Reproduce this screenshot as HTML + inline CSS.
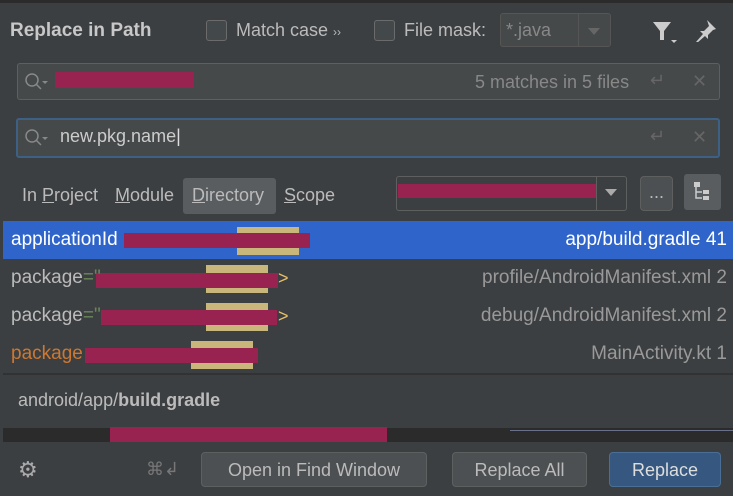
<html><head><style>
body{margin:0;width:733px;height:496px;background:#3c3f41;font-family:"Liberation Sans",sans-serif;color:#bbbbbb;overflow:hidden;position:relative}
div,span{position:absolute;box-sizing:border-box}
.t{font-size:18px;white-space:nowrap}
.r{right:6px;text-align:right}
.cb{width:21px;height:21px;border:1px solid #6b6b6b;border-radius:3px;background:#43494a}
.fld{background:#45494a;border:1px solid #5e6060;border-radius:3px}
.red{background:#992350}
.y{background:#c9b67a}
.btn{border:1px solid #5e6060;border-radius:4px;background:#4c5052;text-align:center;font-size:18px;color:#bbb}
</style></head><body>
<div style="left:0;top:0;width:733px;height:3px;background:#2b2b2b"></div>
<div class="t" style="left:10px;top:20px;font-weight:bold;font-size:19px;color:#c8c8c8">Replace in Path</div>
<div class="cb" style="left:206px;top:20px"></div>
<div class="t" style="left:236px;top:20px">Match case <span style="position:static;font-size:12px">››</span></div>
<div class="cb" style="left:374px;top:20px"></div>
<div class="t" style="left:404px;top:20px">File mask:</div>
<div class="fld" style="left:500px;top:13px;width:111px;height:34px;border-color:#555"></div>
<div class="t" style="left:506px;top:20px;color:#888">*.java</div>
<div style="left:578px;top:13px;width:1px;height:34px;background:#555"></div>
<div style="left:588px;top:28px;border-left:6px solid transparent;border-right:6px solid transparent;border-top:7px solid #666"></div>
<svg style="position:absolute;left:652px;top:20px" width="26" height="26"><path d="M1 2h18l-7 9v9h-4v-9z" fill="#ccc"/><path d="M19 20l3 3 3-3z" fill="#ccc"/></svg>
<svg style="position:absolute;left:694px;top:18px" width="24" height="24"><path d="M13 2l9 9-3 1-5 5v4l-3-3-8 7-1-1 7-8-3-3h4l5-5z" fill="#ccc"/></svg>

<div class="fld" style="left:17px;top:63px;width:703px;height:37px"></div>
<svg style="position:absolute;left:24px;top:72px" width="26" height="20"><circle cx="8" cy="8" r="6" stroke="#888" stroke-width="1.5" fill="none"/><path d="M12 12l5 5" stroke="#888" stroke-width="1.5"/><path d="M18 9h6l-3 3z" fill="#888"/></svg>
<div class="red" style="left:55px;top:72px;width:139px;height:16px"></div>
<div class="t" style="left:475px;top:72px;color:#888">5 matches in 5 files</div>
<div class="t" style="left:650px;top:70px;color:#666">↵</div>
<div class="t" style="left:692px;top:71px;color:#666">✕</div>

<div class="fld" style="left:16px;top:118px;width:704px;height:40px;border:2px solid #3d6185"></div>
<svg style="position:absolute;left:24px;top:128px" width="26" height="20"><circle cx="8" cy="8" r="6" stroke="#888" stroke-width="1.5" fill="none"/><path d="M12 12l5 5" stroke="#888" stroke-width="1.5"/><path d="M18 9h6l-3 3z" fill="#888"/></svg>
<div class="t" style="left:60px;top:126px;color:#ccc">new.pkg.name<span style="position:static;color:#ddd;font-weight:100">|</span></div>
<div class="t" style="left:650px;top:126px;color:#666">↵</div>
<div class="t" style="left:692px;top:127px;color:#666">✕</div>

<div class="t" style="left:22px;top:185px">In <u>P</u>roject</div>
<div class="t" style="left:115px;top:185px"><u>M</u>odule</div>
<div style="left:183px;top:178px;width:93px;height:36px;background:#595d60;border-radius:3px"></div>
<div class="t" style="left:192px;top:185px"><u>D</u>irectory</div>
<div class="t" style="left:284px;top:185px"><u>S</u>cope</div>
<div class="fld" style="left:396px;top:176px;width:231px;height:35px;background:#3c3f41"></div>
<div class="red" style="left:398px;top:184px;width:198px;height:14px"></div>
<div style="left:596px;top:176px;width:1px;height:35px;background:#5e6060"></div>
<div style="left:605px;top:189px;border-left:6px solid transparent;border-right:6px solid transparent;border-top:7px solid #aaa"></div>
<div class="btn" style="left:640px;top:176px;width:33px;height:35px;line-height:30px">...</div>
<div style="left:684px;top:174px;width:37px;height:36px;background:#595d60;border-radius:3px"></div>
<svg style="position:absolute;left:692px;top:180px" width="22" height="24"><rect x="2" y="2" width="6" height="5" fill="#ccc"/><path d="M4 7v11h6M4 12h6" stroke="#ccc" stroke-width="1.5" fill="none"/><rect x="11" y="10" width="6" height="4" fill="#ccc"/><rect x="11" y="16" width="6" height="4" fill="#ccc"/></svg>

<div style="left:3px;top:221px;width:730px;height:38px;background:#2f65ca"></div>
<div class="y" style="left:237px;top:227px;width:62px;height:28px"></div>
<div class="red" style="left:124px;top:233px;width:186px;height:15px"></div>
<div class="t" style="left:11px;top:229px;color:#fff;font-size:19px">applicationId</div>
<div class="t r" style="top:229px;color:#fff;font-size:19px">app/build.gradle 41</div>

<div class="y" style="left:206px;top:265px;width:62px;height:28px"></div>
<div class="red" style="left:96px;top:273px;width:182px;height:15px"></div>
<div class="t" style="left:11px;top:267px;font-size:19px">package<span style="position:static;color:#6a8759">="</span></div>
<div class="t" style="left:278px;top:268px;color:#e8bf6a">&gt;</div>
<div class="t r" style="top:267px;color:#999;font-size:19px">profile/AndroidManifest.xml 2</div>

<div class="y" style="left:206px;top:303px;width:62px;height:28px"></div>
<div class="red" style="left:101px;top:310px;width:176px;height:15px"></div>
<div class="t" style="left:11px;top:305px;font-size:19px">package<span style="position:static;color:#6a8759">="</span></div>
<div class="t" style="left:278px;top:306px;color:#e8bf6a">&gt;</div>
<div class="t r" style="top:305px;color:#999;font-size:19px">debug/AndroidManifest.xml 2</div>

<div class="y" style="left:191px;top:341px;width:62px;height:28px"></div>
<div class="red" style="left:85px;top:348px;width:173px;height:15px"></div>
<div class="t" style="left:11px;top:343px;color:#cc7832;font-size:19px">package</div>
<div class="t r" style="top:343px;color:#999;font-size:19px">MainActivity.kt 1</div>

<div style="left:3px;top:373px;width:730px;height:2px;background:#323232"></div>
<div class="t" style="left:18px;top:390px;color:#bbb">android/app/<b>build.gradle</b></div>
<div style="left:3px;top:428px;width:730px;height:14px;background:#2b2b2b"></div>
<div class="red" style="left:110px;top:427px;width:277px;height:15px"></div>
<div style="left:510px;top:430px;width:223px;height:1px;background:#6a6f8a"></div>

<div class="t" style="left:18px;top:457px;font-size:22px;color:#aaa">⚙</div>
<div class="t" style="left:146px;top:459px;color:#777">⌘↲</div>
<div class="btn" style="left:201px;top:452px;width:226px;height:35px;line-height:35px">Open in Find Window</div>
<div class="btn" style="left:452px;top:452px;width:135px;height:35px;line-height:35px">Replace All</div>
<div class="btn" style="left:609px;top:452px;width:112px;height:35px;line-height:35px;background:#365880;border-color:#4a6f96;color:#ddd">Replace</div>
</body></html>
